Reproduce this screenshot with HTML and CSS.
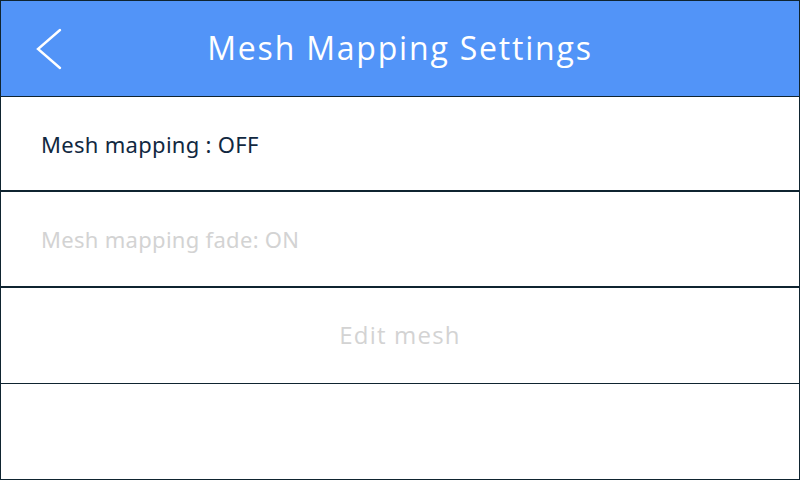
FILE: index.html
```html
<!DOCTYPE html>
<html lang="en">
<head>
    <meta charset="UTF-8">
    <meta name="viewport" content="width=device-width, initial-scale=1.0">
    <title>Mesh Mapping Settings</title>
    <link rel="stylesheet" href="styles.css">
</head>
<body>
    <div class="tela">
        <header class="topo">
            <button class="voltar" aria-label="Back">
                <svg width="28" height="42" viewBox="0 0 28 42">
                    <polyline points="25,2 3,21 25,40" fill="none" stroke="white" stroke-width="2.4" stroke-linecap="round" stroke-linejoin="miter"/>
                </svg>
            </button>
            <h1>Mesh Mapping Settings</h1>
        </header>

        <main class="lista">
            <div class="item linha-grossa primeiro">
                <p class="opcao">Mesh mapping : OFF</p>
            </div>
            <div class="item linha-grossa">
                <p class="opcao desativado">Mesh mapping fade: ON</p>
            </div>
            <div class="item centro">
                <p class="botao desativado">Edit mesh</p>
            </div>
            <div class="item ultimo"></div>
        </main>
    </div>
</body>
</html>
```

FILE: styles.css
```css
:root{
    --azul: #5294f8;
    --linha: #0f2430;
    --texto: #11283f;
    --cinza: #d3d3d3;
}

*{
    margin: 0;
    padding: 0;
    box-sizing: border-box;
}

body{
    background-color: white;
    width: 800px;
    height: 480px;
}

.tela{
    width: 800px;
    height: 480px;
    border: 1px solid var(--linha);
    display: flex;
    flex-direction: column;
}

.topo{
    height: 96px;
    flex-shrink: 0;
    background-color: var(--azul);
    border-bottom: 1px solid var(--linha);
    display: flex;
    align-items: center;
    justify-content: center;
    position: relative;
}

.topo h1{
    color: white;
    font-family: "Open Sans", sans-serif;
    font-weight: 400;
    font-size: 32px;
    letter-spacing: 1.8px;
    padding-bottom: 2px;
}

.voltar{
    position: absolute;
    left: 34px;
    top: 27px;
    background: none;
    border: none;
    display: flex;
}

.lista{
    flex: 1;
    display: flex;
    flex-direction: column;
}

.item{
    height: 96px;
    flex-shrink: 0;
    display: flex;
    align-items: center;
    padding-left: 40px;
    border-bottom: 1px solid var(--linha);
}

.linha-grossa{
    border-bottom-width: 2px;
}

.primeiro{
    height: 95px;
}

.centro{
    padding-left: 0;
    justify-content: center;
}

.ultimo{
    flex: 1;
    border-bottom: none;
}

.opcao{
    font-family: "Noto Sans", sans-serif;
    font-size: 22px;
    letter-spacing: 0.3px;
    color: var(--texto);
}

.botao{
    font-family: "Open Sans", sans-serif;
    font-size: 24px;
    letter-spacing: 1.2px;
    padding-bottom: 2px;
}

.desativado{
    color: var(--cinza);
}
```
